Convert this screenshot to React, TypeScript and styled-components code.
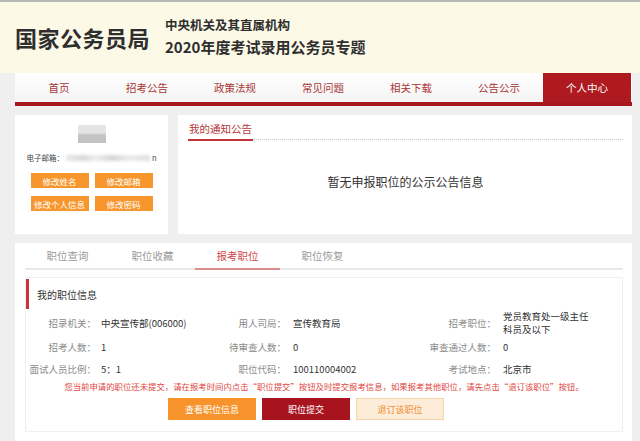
import * as React from "react"
import styled, { createGlobalStyle } from "styled-components"

const GlobalStyle = createGlobalStyle`
  html, body {
    margin: 0;
    padding: 0;
    background: #efefef;
    font-family: "Noto Sans CJK SC", "Noto Sans", sans-serif;
    color: #333;
  }
`

const Page = styled.div`
  width: 640px;
  height: 441px;
  overflow: hidden;
  background: #efefef;
`

const Header = styled.header`
  height: 73px;
  border-top: 2px solid #b8b8b4;
  background: #fdf9e7;
  display: flex;
  align-items: center;
  padding-left: 15px;
  box-sizing: border-box;
`

const Logo = styled.div`
  font-size: 22px;
  font-weight: 700;
  color: #2e2e2e;
  letter-spacing: 0.5px;
  width: 150px;
  margin-top: -2px;
`

const Topic = styled.div`
  display: flex;
  flex-direction: column;
  gap: 2px;
  margin-top: -4px;
`

const TopicSmall = styled.div`
  font-size: 12.5px;
  font-weight: 700;
  color: #2e2e2e;
`

const TopicBig = styled.div`
  font-size: 15px;
  font-weight: 700;
  color: #2e2e2e;
`

const Nav = styled.nav`
  margin: 0 8px 0 15px;
  display: flex;
  height: 29px;
  background: linear-gradient(#ffffff, #f4f4f4);
  border-bottom: 4px solid #a8171e;
`

const NavItem = styled.div<{ $active?: boolean }>`
  width: 88px;
  display: flex;
  align-items: center;
  justify-content: center;
  font-size: 10.5px;
  color: ${p => (p.$active ? "#fff" : "#a83634")};
  background: ${p => (p.$active ? "#ae1a20" : "transparent")};
`

const Main = styled.div`
  margin: 9px 8px 0 15px;
  display: flex;
  flex-direction: column;
  gap: 9px;
`

const TopRow = styled.div`
  display: flex;
  gap: 10px;
  height: 119px;
`

const ProfileCard = styled.div`
  width: 153px;
  background: #fff;
  display: flex;
  flex-direction: column;
  align-items: center;
  padding-top: 10px;
  box-sizing: border-box;
`

const Avatar = styled.div`
  width: 28px;
  height: 18px;
  background: linear-gradient(#e6e6e6 0%, #e2e2e2 45%, #c4c4c4 55%, #c2c2c2 100%);
  filter: blur(0.6px);
`

const EmailRow = styled.div`
  display: flex;
  align-items: center;
  width: 130px;
  margin-top: 9px;
  font-size: 7.5px;
  color: #444;
`

const Blurred = styled.div`
  flex: 1;
  height: 6px;
  margin: 0 2px;
  background: linear-gradient(90deg, #eaeaea, #d8d8d8 20%, #ececec 35%, #d6d6d6 55%, #ebebeb 75%, #e0e0e0);
  filter: blur(1.5px);
`

const BtnGrid = styled.div`
  display: grid;
  grid-template-columns: 58px 58px;
  column-gap: 6px;
  row-gap: 8px;
  margin-top: 10px;
`

const SmallBtn = styled.div`
  height: 15px;
  background: #f7962d;
  color: #fff;
  font-size: 8.5px;
  display: flex;
  align-items: center;
  justify-content: center;
`

const NoticeCard = styled.div`
  flex: 1;
  background: #fff;
  padding: 6px 9px 0 10px;
  display: flex;
  flex-direction: column;
`

const NoticeHead = styled.div`
  display: flex;
  align-items: flex-end;
`

const NoticeTitle = styled.div`
  font-size: 10.5px;
  color: #b5373a;
  padding: 0 1px 3px;
  border-bottom: 2px solid #c0343a;
`

const Dots = styled.div`
  flex: 1;
  border-bottom: 1px dotted #c8c8c8;
  margin-bottom: 1px;
`

const Empty = styled.div`
  flex: 1;
  display: flex;
  justify-content: center;
  padding-top: 32px;
  font-size: 12px;
  color: #333;
`

const Panel = styled.div`
  background: #fff;
  height: 200px;
  padding: 0 9px 0 10px;
`

const Tabs = styled.div`
  display: flex;
  height: 25px;
  border-bottom: 2px solid #e8e8e8;
`

const Tab = styled.div<{ $active?: boolean }>`
  width: 85px;
  display: flex;
  align-items: center;
  justify-content: center;
  font-size: 10.5px;
  color: ${p => (p.$active ? "#d0454a" : "#9a9a9a")};
  margin-bottom: -2px;
  border-bottom: 2px solid ${p => (p.$active ? "#d98b8d" : "transparent")};
`

const InfoBox = styled.div`
  margin-top: 7px;
  border: 1px solid #f0f0f0;
  padding-bottom: 11px;
`

const InfoHead = styled.div`
  height: 30px;
  margin-top: 1px;
  border-left: 3px solid #c9343a;
  display: flex;
  align-items: center;
  padding-left: 8px;
  font-size: 10px;
  color: #333;
`

const Details = styled.div`
  display: grid;
  grid-template-columns: 70px 115px 75px 135px 75px 1fr;
  grid-template-rows: 26px 22px 22px;
  align-items: center;
  margin-top: 1px;
  font-size: 9.5px;
`

const Label = styled.div`
  text-align: right;
  color: #8a8a8a;
  white-space: nowrap;
`

const Value = styled.div<{ $pad?: number }>`
  padding-left: ${p => p.$pad ?? 7}px;
  color: #333;
  line-height: 13px;
  white-space: nowrap;
`

const Note = styled.div`
  text-align: center;
  font-size: 8.4px;
  color: #e0453e;
  line-height: 12px;
`

const Actions = styled.div`
  display: flex;
  justify-content: center;
  gap: 6px;
  margin-top: 6px;
  padding-right: 36px;
`

const ActionBtn = styled.div<{ $kind: "orange" | "red" | "light" }>`
  width: 88px;
  height: 22px;
  box-sizing: border-box;
  display: flex;
  align-items: center;
  justify-content: center;
  font-size: 9px;
  color: ${p => (p.$kind === "light" ? "#ef8f32" : "#fff")};
  background: ${p =>
    p.$kind === "orange" ? "#f7932a" : p.$kind === "red" ? "#a8141e" : "#fdecd8"};
  border: 1px solid ${p =>
    p.$kind === "orange" ? "#f7932a" : p.$kind === "red" ? "#a8141e" : "#f6d3aa"};
`

const navItems = ["首页", "招考公告", "政策法规", "常见问题", "相关下载", "公告公示", "个人中心"]
const tabs = ["职位查询", "职位收藏", "报考职位", "职位恢复"]

const details: [string, React.ReactNode, number?][] = [
  ["招录机关：", "中央宣传部(006000)", 5],
  ["用人司局：", "宣传教育局"],
  ["招考职位：", <>党员教育处一级主任<br />科员及以下</>],
  ["招考人数：", "1", 5],
  ["待审查人数：", "0"],
  ["审查通过人数：", "0"],
  ["面试人员比例：", "5：1", 5],
  ["职位代码：", "100110004002"],
  ["考试地点：", "北京市"],
]

export default function App() {
  return (
    <Page>
      <GlobalStyle />
      <Header>
        <Logo>国家公务员局</Logo>
        <Topic>
          <TopicSmall>中央机关及其直属机构</TopicSmall>
          <TopicBig>2020年度考试录用公务员专题</TopicBig>
        </Topic>
      </Header>
      <Nav>
        {navItems.map((n, i) => (
          <NavItem key={n} $active={i === navItems.length - 1}>{n}</NavItem>
        ))}
      </Nav>
      <Main>
        <TopRow>
          <ProfileCard>
            <Avatar />
            <EmailRow>
              电子邮箱：<Blurred />n
            </EmailRow>
            <BtnGrid>
              <SmallBtn>修改姓名</SmallBtn>
              <SmallBtn>修改邮箱</SmallBtn>
              <SmallBtn>修改个人信息</SmallBtn>
              <SmallBtn>修改密码</SmallBtn>
            </BtnGrid>
          </ProfileCard>
          <NoticeCard>
            <NoticeHead>
              <NoticeTitle>我的通知公告</NoticeTitle>
              <Dots />
            </NoticeHead>
            <Empty>暂无申报职位的公示公告信息</Empty>
          </NoticeCard>
        </TopRow>
        <Panel>
          <Tabs>
            {tabs.map((t, i) => (
              <Tab key={t} $active={i === 2}>{t}</Tab>
            ))}
          </Tabs>
          <InfoBox>
            <InfoHead>我的职位信息</InfoHead>
            <Details>
              {details.map(([l, v, pad]) => (
                <React.Fragment key={l}>
                  <Label>{l}</Label>
                  <Value $pad={pad}>{v}</Value>
                </React.Fragment>
              ))}
            </Details>
            <Note>
              您当前申请的职位还未提交，请在报考时间内点击“职位提交”按钮及时提交报考信息，如果报考其他职位，请先点击“退订该职位”按钮。
            </Note>
            <Actions>
              <ActionBtn $kind="orange">查看职位信息</ActionBtn>
              <ActionBtn $kind="red">职位提交</ActionBtn>
              <ActionBtn $kind="light">退订该职位</ActionBtn>
            </Actions>
          </InfoBox>
        </Panel>
      </Main>
    </Page>
  )
}
